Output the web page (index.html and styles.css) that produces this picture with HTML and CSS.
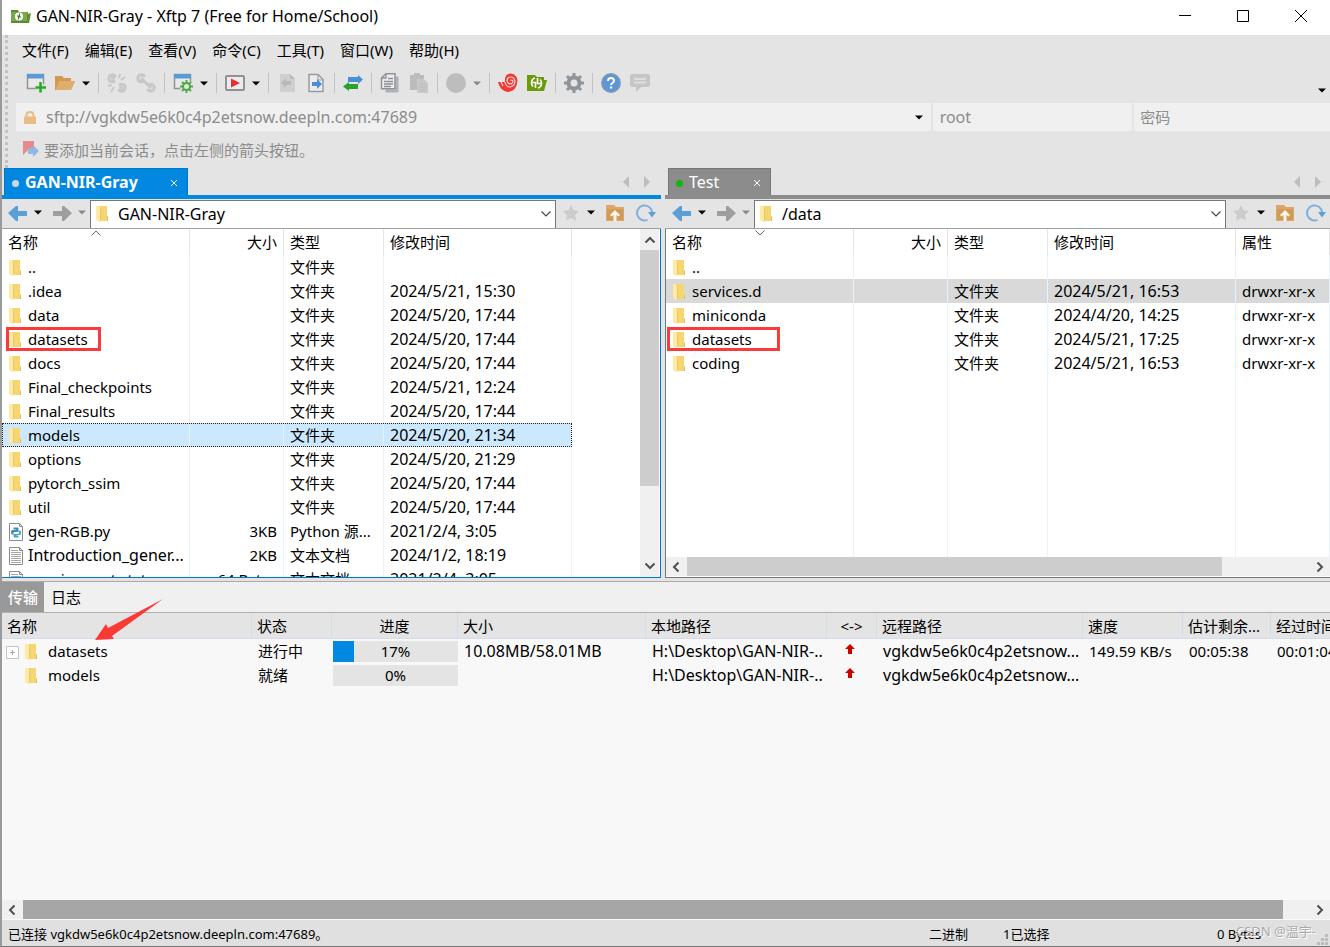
FILE: index.html
```html
<!DOCTYPE html>
<html lang="zh-CN">
<head>
<meta charset="utf-8">
<title>GAN-NIR-Gray - Xftp 7</title>
<link rel="stylesheet" href="styles.css">
</head>
<body>
<svg class="symbols" aria-hidden="true">
  <symbol id="folder" viewBox="0 0 13 18"><path d="M3 1h8v10l1 1v4H4z" fill="#f6d673"/><path d="M11 11l1 1v4h-1z" fill="#e9bd55"/><path d="M0 1h2l2 2v14h-1l-3-2z" fill="#ffe9a6"/><path d="M4.500 3v13" stroke="#edc766" fill="none"/></symbol>
  <symbol id="textfile" viewBox="0 0 14 18"><path d="M.5.5h10l3 3v14H.5z" fill="#fff" stroke="#8c8c8c"/><path d="M10.500.5v3h3" fill="none" stroke="#8c8c8c"/><path d="M2 3.500h7M2 5.500h10M2 7.500h10M2 9.500h10M2 11.500h10M2 13.500h10M2 15.500h10" stroke="#a8a8a8"/></symbol>
  <symbol id="pyfile" viewBox="0 0 14 18"><path d="M.5.5h10l3 3v14H.5z" fill="#fff" stroke="#8c8c8c"/><path d="M10.500.5v3h3" fill="none" stroke="#8c8c8c"/><path d="M4.500 4.500h4q1 0 1 1V9H5.500q-1 0-1 1v1.500H3q-1 0-1-2t1-2.500h4v-.6H4.500z" fill="#3d8fb8"/><path d="M9.500 14.500h-4q-1 0-1-1V11h4q1.500 0 1.500-1.500V7.500h1q1 0 1 2t-1 2.500H7.500v.6h2z" fill="#4aa3c9"/></symbol>
  <symbol id="back" viewBox="0 0 20 16"><path d="M0 8l8-7h2v5h9v5h-9v5H8z" fill="#5b9fd8"/></symbol>
  <symbol id="forward" viewBox="0 0 20 16"><path d="M20 8l-8-7h-2v5H1v5h9v5h2z" fill="#9e9e9e"/></symbol>
  <symbol id="caret" viewBox="0 0 8 5"><path d="M0 .5h8L4 4.500z" fill="currentColor"/></symbol>
  <symbol id="star" viewBox="0 0 16 16"><path d="M8 0l2.500 5.200 5.500.8-4 4 1 5.500-5-2.600-5 2.600 1-5.500-4-4 5.500-.8z" fill="#cccccc"/></symbol>
  <symbol id="upfolder" viewBox="0 0 18 16"><path d="M0 0h8l2 2h8v14H0z" fill="#dda765"/><path d="M1 4h16v11H1z" fill="#d09b58"/><path d="M9 5l5 5-1.500 1.500L10.500 10v6h-3v-6l-2 1.500L4 10z" fill="#fff6e8"/></symbol>
  <symbol id="reload" viewBox="0 0 20 18"><path d="M11.500 15.800A7.500 7.500 0 1 1 16 8" fill="none" stroke="#7fb0de" stroke-width="2"/><path d="M12 8h8l-4 5.500z" fill="#5b9fd8"/></symbol>
  <symbol id="chevdown" viewBox="0 0 10 6"><path d="M.5.5L5 5 9.500.5" fill="none" stroke="#444" stroke-width="1.200"/></symbol>
  <symbol id="sbup" viewBox="0 0 12 8"><path d="M1.500 6.500L6 2l4.500 4.500" fill="none" stroke="#505050" stroke-width="2"/></symbol>
  <symbol id="sbdown" viewBox="0 0 12 8"><path d="M1.500 1.500L6 6l4.500-4.500" fill="none" stroke="#505050" stroke-width="2"/></symbol>
  <symbol id="sbleft" viewBox="0 0 8 12"><path d="M6.500 1.500L2 6l4.500 4.500" fill="none" stroke="#505050" stroke-width="2"/></symbol>
  <symbol id="sbright" viewBox="0 0 8 12"><path d="M1.500 1.500L6 6l-4.500 4.500" fill="none" stroke="#505050" stroke-width="2"/></symbol>
  <symbol id="cross" viewBox="0 0 8 8"><path d="M1 1l6 6M7 1L1 7" stroke="#fff"/></symbol>
  <symbol id="tri-l" viewBox="0 0 6 12"><path d="M6 0v12L0 6z" fill="#bdbdbd"/></symbol>
  <symbol id="tri-r" viewBox="0 0 6 12"><path d="M0 0v12l6-6z" fill="#bdbdbd"/></symbol>
  <symbol id="upload" viewBox="0 0 10 10"><path d="M5 0l5 5H7v5H3V5H0z" fill="#c00"/></symbol>
</svg>

<div class="window">
  <header class="titlebar">
    <svg class="appicon" width="20" height="14" viewBox="0 0 20 14"><path d="M0 1h7l1 2h9v2l3-1-2 10H0z" fill="#5d8c33"/><path d="M0 3h16v9H0z" fill="#79a84d"/><circle cx="8" cy="7.500" r="4" fill="#fff"/><path d="M6 7h1.500v3.500M8.500 4.500V8H10" fill="none" stroke="#4a7d28" stroke-width="1.200"/></svg>
    <h1 class="title">GAN-NIR-Gray - Xftp 7 (Free for Home/School)</h1>
    <div class="winbtns">
      <button class="winbtn" aria-label="最小化"><svg width="12" height="12"><path d="M0 5.500h12" stroke="#000"/></svg></button>
      <button class="winbtn" aria-label="最大化"><svg width="12" height="12"><path d="M.5.5h11v11H.5z" fill="none" stroke="#000"/></svg></button>
      <button class="winbtn" aria-label="关闭"><svg width="12" height="12"><path d="M0 0l12 12M12 0L0 12" stroke="#000"/></svg></button>
    </div>
  </header>

  <div class="chrome">
    <nav class="menu">
      <button class="menuitem">文件(F)</button><button class="menuitem">编辑(E)</button><button class="menuitem">查看(V)</button><button class="menuitem">命令(C)</button><button class="menuitem">工具(T)</button><button class="menuitem">窗口(W)</button><button class="menuitem">帮助(H)</button>
    </nav>
    <div class="toolbar">
      <div class="group">
        <button class="tool" aria-label="新建"><svg width="20" height="20"><path d="M1.500 1.500h16v14h-16z" fill="#e9e9e9" stroke="#8f959b" stroke-width="1.500"/><path d="M1 1h17v4.500H1z" fill="#5b9bd5"/><path d="M14.500 9v10M9.500 14h10" stroke="#e4e4e4" stroke-width="5"/><path d="M14.500 9v10.500M9.500 14.500h10.500" stroke="#27a827" stroke-width="2.500"/></svg></button>
        <button class="tool" aria-label="打开"><svg width="20" height="20"><path d="M0 3h7l2 2h7v3h4l-4 9H0z" fill="#cf9a56"/><path d="M1 16L4 8h15.500L16 17H0z" fill="#dfad6c"/></svg></button>
        <button class="drop" aria-label="打开选项"><svg class="caret"><use href="#caret"/></svg></button>
      </div>
      <div class="group">
        <button class="tool" aria-label="断开"><svg width="20" height="20" fill="none" stroke="#c8c8c8" stroke-width="3"><path d="M8 7.500A3.500 3.500 0 1 1 8.500 4M12 12.500a3.500 3.500 0 1 1-.5 3.500M4 5h4M12 15h4"/><path d="M12 5l1-4M14 7l4-3M5 12l-4 1M7 14l-3 5" stroke-width="2"/></svg></button>
        <button class="tool" aria-label="重新连接"><svg width="20" height="20" fill="none" stroke="#c8c8c8" stroke-width="3"><path d="M8 7.500A3.500 3.500 0 1 1 8.500 4M12 12.500a3.500 3.500 0 1 1-.5 3.500"/><path d="M5 5l10 10"/></svg></button>
      </div>
      <div class="group">
        <button class="tool" aria-label="属性"><svg width="20" height="20"><path d="M1.500 1.500h16v14h-16z" fill="#e9e9e9" stroke="#8f959b" stroke-width="1.500"/><path d="M1 1h17v4.500H1z" fill="#5b9bd5"/><circle cx="13.500" cy="13.500" r="6.500" fill="#e4e4e4"/><circle cx="13.500" cy="13.500" r="3.500" fill="none" stroke="#4daa45" stroke-width="2"/><path d="M13.500 7v3M13.500 17v3M7 13.500h3M17 13.500h3M9 9l2 2M16 16l2 2M18 9l-2 2M11 16l-2 2" stroke="#4daa45" stroke-width="1.800"/></svg></button>
        <button class="drop" aria-label="属性选项"><svg class="caret"><use href="#caret"/></svg></button>
      </div>
      <div class="group">
        <button class="tool" aria-label="运行"><svg width="20" height="20"><rect x="1" y="3" width="18" height="14" rx="1" fill="#ececec" stroke="#8f9194" stroke-width="2"/><path d="M6 5.500l9 4.500-9 4.500z" fill="#e02f35"/></svg></button>
        <button class="drop" aria-label="运行选项"><svg class="caret"><use href="#caret"/></svg></button>
      </div>
      <div class="group">
        <button class="tool" aria-label="向左传输"><svg width="20" height="20"><path d="M3 1h10l5 5v13H3z" fill="#cfcfcf"/><path d="M13 1v5h5M4 10l5-5v3h5v4H9v3z" fill="#b9b9b9"/></svg></button>
        <button class="tool" aria-label="向右传输"><svg width="20" height="20"><path d="M3 1.500h9l5 5v12H3z" fill="#ececec" stroke="#979ca1" stroke-width="1.500"/><path d="M12 1v6h5" fill="none" stroke="#979ca1"/><path d="M16 11l-5-5v3H6v4h5v3z" fill="#478fd6"/></svg></button>
      </div>
      <div class="group">
        <button class="tool" aria-label="同步"><svg width="20" height="20"><path d="M5 4h10V2l5 4.500-5 4.500V9H5z" fill="#478fd6"/><path d="M15 11H6V9l-6 4.500L6 18v-2h9z" fill="#27a32b"/></svg></button>
      </div>
      <div class="group">
        <button class="tool" aria-label="复制"><svg width="20" height="20"><path d="M6 19V17h10V4h2v15z" fill="#b6bac0" stroke="#a8acb2"/><path d="M6 .8h9v15H1.500V5z" fill="#ededed" stroke="#8d9298" stroke-width="1.500"/><path d="M6 1v4H2M4 8.500h9M4 11h9M4 13.500h7M8 5.500h5" fill="none" stroke="#8d9298" stroke-width="1.300"/></svg></button>
        <button class="tool" aria-label="粘贴"><svg width="20" height="20"><path d="M1 2h4V0h6v2h4v4h-7v11H1z" fill="#bcbcbc"/><path d="M8 6h7l4 4v10H8z" fill="#c9c9c9"/><path d="M10 11h7M10 14h7M10 17h7" stroke="#bababa"/></svg></button>
      </div>
      <div class="group">
        <button class="tool" aria-label="浏览器"><svg width="20" height="20"><circle cx="10" cy="10" r="10" fill="#bdbdbd"/></svg></button>
        <button class="drop dim" aria-label="浏览器选项"><svg class="caret"><use href="#caret"/></svg></button>
      </div>
      <div class="group">
        <button class="tool" aria-label="Xshell"><svg width="20" height="20"><path d="M0 9h7Q6 1 13 .5q6 1 6.500 7Q19 18 10 19 2 18 0 9z" fill="#f23a32"/><path d="M7 9q1 5 5 5 5-1 5-6-1-4-4-4-4 0-4 4 1 3 4 3 2-1 2-3-1-1.500-2.500-.5M17 2l3 1M3 9l2 4" fill="none" stroke="#f3d9d7" stroke-width="1.200"/></svg></button>
        <button class="tool" aria-label="Xftp"><svg width="20" height="20"><path d="M0 2h8l2 2h7v3h3l-3 11H0z" fill="#6b9a0c"/><path d="M8.500 15V9.500H5.500M8 5Q4.500 6 4.500 10q0 2 1.500 3.500M10.500 5v5.500h3M11 15q3.500-1 3.500-5 0-2-1.500-3.500" fill="none" stroke="#fff" stroke-width="1.600"/></svg></button>
      </div>
      <div class="group">
        <button class="tool" aria-label="选项"><svg width="20" height="20"><circle cx="10" cy="10" r="5.500" fill="none" stroke="#8f9499" stroke-width="4"/><path d="M10 0v4M10 16v4M0 10h4M16 10h4M3 3l3 3M14 14l3 3M17 3l-3 3M6 14l-3 3" stroke="#8f9499" stroke-width="3"/></svg></button>
      </div>
      <div class="group">
        <button class="tool" aria-label="帮助"><svg width="20" height="20"><circle cx="10" cy="10" r="9.200" fill="#5b96d6" stroke="#8198b0" stroke-width="1.500"/><path d="M7 8q0-3 3-3t3 2.500q0 1.500-1.500 2.500T10 12" fill="none" stroke="#fff" stroke-width="2"/><path d="M9 13.500h2.200v2H9z" fill="#fff"/></svg></button>
        <button class="tool" aria-label="反馈"><svg width="20" height="20"><path d="M2 1h16q2 0 2 2v9q0 2-2 2h-7l-5 5v-5H2q-2 0-2-2V3q0-2 2-2z" fill="#c6c6c6"/><path d="M4 6h12M4 9.500h12" stroke="#dedede" stroke-width="2"/></svg></button>
      </div>
      <button class="overflow" aria-label="更多"><svg class="caret"><use href="#caret"/></svg></button>
    </div>
    <div class="connect">
      <label class="host"><svg width="12" height="13"><path d="M2.500 6V4Q2.500 1 6 1t3.500 3v2" fill="none" stroke="#e8bd85" stroke-width="2"/><path d="M0 5.500h12V13H0z" fill="#e8bd85"/></svg><input class="field" aria-label="主机" value="sftp://vgkdw5e6k0c4p2etsnow.deepln.com:47689"><svg class="caret"><use href="#caret"/></svg></label>
      <input class="field user" aria-label="用户名" value="root">
      <input class="field pass" type="password" aria-label="密码" placeholder="密码">
    </div>
    <div class="hint"><svg width="16" height="17"><path d="M0 0h11v12l-5-4-6 6z" fill="#e58b8b"/><path d="M5 7h5V4l6 6-6 6v-3H5z" fill="#93b7de"/></svg><span>要添加当前会话，点击左侧的箭头按钮。</span></div>
  </div>

  <main class="panes">
    <section class="pane local">
      <div class="tabs">
        <div class="tab"><i class="dot"></i><button class="tabname">GAN-NIR-Gray</button><button class="close" aria-label="关闭标签"><svg width="8" height="8"><use href="#cross"/></svg></button></div>
        <div class="tabnav"><button aria-label="上一个"><svg width="6" height="12"><use href="#tri-l"/></svg></button><button aria-label="下一个"><svg width="6" height="12"><use href="#tri-r"/></svg></button></div>
      </div>
      <div class="pathbar">
        <div class="navs"><button aria-label="后退"><svg width="20" height="16"><use href="#back"/></svg></button><svg class="caret"><use href="#caret"/></svg><button aria-label="前进"><svg width="20" height="16"><use href="#forward"/></svg></button><svg class="caret dim"><use href="#caret"/></svg></div>
        <label class="path"><svg width="13" height="18"><use href="#folder"/></svg><input aria-label="本地路径" value="GAN-NIR-Gray"><svg width="10" height="6"><use href="#chevdown"/></svg></label>
        <div class="acts"><button aria-label="收藏"><svg width="16" height="16"><use href="#star"/></svg></button><svg class="caret"><use href="#caret"/></svg><button aria-label="上级"><svg width="18" height="16"><use href="#upfolder"/></svg></button><button aria-label="刷新"><svg width="20" height="18"><use href="#reload"/></svg></button></div>
      </div>
      <div class="content">
        <div class="list">
          <table class="files">
            <colgroup><col class="c-name"><col class="c-size"><col class="c-type"><col class="c-date"></colgroup>
            <thead><tr><th>名称<svg class="sort" width="10" height="6" viewBox="0 0 10 6"><path d="M.5 5.500L5 1l4.500 4.500" fill="none" stroke="#666"/></svg></th><th class="r">大小</th><th>类型</th><th>修改时间</th></tr></thead>
            <tbody>
              <tr><td class="n"><svg><use href="#folder"/></svg>..</td><td></td><td>文件夹</td><td></td></tr>
              <tr><td class="n"><svg><use href="#folder"/></svg>.idea</td><td></td><td>文件夹</td><td class="lg">2024/5/21, 15:30</td></tr>
              <tr><td class="n"><svg><use href="#folder"/></svg>data</td><td></td><td>文件夹</td><td class="lg">2024/5/20, 17:44</td></tr>
              <tr><td class="n mark"><svg><use href="#folder"/></svg>datasets</td><td></td><td>文件夹</td><td class="lg">2024/5/20, 17:44</td></tr>
              <tr><td class="n"><svg><use href="#folder"/></svg>docs</td><td></td><td>文件夹</td><td class="lg">2024/5/20, 17:44</td></tr>
              <tr><td class="n"><svg><use href="#folder"/></svg>Final_checkpoints</td><td></td><td>文件夹</td><td class="lg">2024/5/21, 12:24</td></tr>
              <tr><td class="n"><svg><use href="#folder"/></svg>Final_results</td><td></td><td>文件夹</td><td class="lg">2024/5/20, 17:44</td></tr>
              <tr class="selected"><td class="n"><svg><use href="#folder"/></svg>models</td><td></td><td>文件夹</td><td class="lg">2024/5/20, 21:34</td></tr>
              <tr><td class="n"><svg><use href="#folder"/></svg>options</td><td></td><td>文件夹</td><td class="lg">2024/5/20, 21:29</td></tr>
              <tr><td class="n"><svg><use href="#folder"/></svg>pytorch_ssim</td><td></td><td>文件夹</td><td class="lg">2024/5/20, 17:44</td></tr>
              <tr><td class="n"><svg><use href="#folder"/></svg>util</td><td></td><td>文件夹</td><td class="lg">2024/5/20, 17:44</td></tr>
              <tr><td class="n"><svg class="doc"><use href="#pyfile"/></svg>gen-RGB.py</td><td class="r">3KB</td><td>Python 源...</td><td class="lg">2021/2/4, 3:05</td></tr>
              <tr><td class="n lg"><svg class="doc"><use href="#textfile"/></svg>Introduction_gener...</td><td class="r">2KB</td><td>文本文档</td><td class="lg">2024/1/2, 18:19</td></tr>
              <tr><td class="n"><svg class="doc"><use href="#textfile"/></svg>requirements.txt</td><td class="r">64 Bytes</td><td>文本文档</td><td class="lg">2021/2/4, 3:05</td></tr>
            </tbody>
          </table>
        </div>
        <div class="vscroll"><svg width="12" height="8"><use href="#sbup"/></svg><div class="vtrack"><div class="vthumb"></div></div><svg width="12" height="8"><use href="#sbdown"/></svg></div>
      </div>
    </section>

    <section class="pane remote">
      <div class="tabs">
        <div class="tab"><i class="dot"></i><button class="tabname">Test</button><button class="close" aria-label="关闭标签"><svg width="8" height="8"><use href="#cross"/></svg></button></div>
        <div class="tabnav"><button aria-label="上一个"><svg width="6" height="12"><use href="#tri-l"/></svg></button><button aria-label="下一个"><svg width="6" height="12"><use href="#tri-r"/></svg></button></div>
      </div>
      <div class="pathbar">
        <div class="navs"><button aria-label="后退"><svg width="20" height="16"><use href="#back"/></svg></button><svg class="caret"><use href="#caret"/></svg><button aria-label="前进"><svg width="20" height="16"><use href="#forward"/></svg></button><svg class="caret dim"><use href="#caret"/></svg></div>
        <label class="path"><svg width="13" height="18"><use href="#folder"/></svg><input aria-label="远程路径" value="/data"><svg width="10" height="6"><use href="#chevdown"/></svg></label>
        <div class="acts"><button aria-label="收藏"><svg width="16" height="16"><use href="#star"/></svg></button><svg class="caret"><use href="#caret"/></svg><button aria-label="上级"><svg width="18" height="16"><use href="#upfolder"/></svg></button><button aria-label="刷新"><svg width="20" height="18"><use href="#reload"/></svg></button></div>
      </div>
      <div class="content stacked">
        <div class="list">
          <table class="files full">
            <colgroup><col class="c-name"><col class="c-size"><col class="c-type"><col class="c-date"><col></colgroup>
            <thead><tr><th>名称<svg class="sort" width="10" height="6" viewBox="0 0 10 6"><path d="M.5.5L5 5 9.500.5" fill="none" stroke="#666"/></svg></th><th class="r">大小</th><th>类型</th><th>修改时间</th><th>属性</th></tr></thead>
            <tbody>
              <tr><td class="n"><svg><use href="#folder"/></svg>..</td><td></td><td></td><td></td><td></td></tr>
              <tr class="inactive"><td class="n"><svg><use href="#folder"/></svg>services.d</td><td></td><td>文件夹</td><td class="lg">2024/5/21, 16:53</td><td>drwxr-xr-x</td></tr>
              <tr><td class="n"><svg><use href="#folder"/></svg>miniconda</td><td></td><td>文件夹</td><td class="lg">2024/4/20, 14:25</td><td>drwxr-xr-x</td></tr>
              <tr><td class="n mark"><svg><use href="#folder"/></svg>datasets</td><td></td><td>文件夹</td><td class="lg">2024/5/21, 17:25</td><td>drwxr-xr-x</td></tr>
              <tr><td class="n"><svg><use href="#folder"/></svg>coding</td><td></td><td>文件夹</td><td class="lg">2024/5/21, 16:53</td><td>drwxr-xr-x</td></tr>
              <tr class="filler"><td></td><td></td><td></td><td></td><td></td></tr>
            </tbody>
          </table>
        </div>
        <div class="hscroll"><svg width="8" height="12"><use href="#sbleft"/></svg><div class="htrack"><div class="hthumb"></div></div><svg width="8" height="12"><use href="#sbright"/></svg></div>
      </div>
    </section>
  </main>

  <section class="transfer">
    <div class="ttabs"><button class="ttab on">传输</button><button class="ttab">日志</button></div>
    <div class="tlist">
      <table class="jobs">
        <colgroup><col class="j-name"><col class="j-state"><col class="j-prog"><col class="j-size"><col class="j-local"><col class="j-dir"><col class="j-remote"><col class="j-speed"><col class="j-left"><col class="j-time"></colgroup>
        <thead><tr><th>名称</th><th>状态</th><th class="mid">进度</th><th>大小</th><th>本地路径</th><th class="mid">&lt;-&gt;</th><th>远程路径</th><th>速度</th><th>估计剩余...</th><th>经过时间</th></tr></thead>
        <tbody>
          <tr><td class="n"><svg class="plus"><path d="M.5.5h12v12H.5z" fill="#fff" stroke="#c4c4c4"/><path d="M4 6.500h5M6.500 4v5" stroke="#aaa"/></svg><svg class="f"><use href="#folder"/></svg>datasets</td><td>进行中</td><td class="bar"><div class="progress"><div class="fill" style="width:17%"></div><span>17%</span></div></td><td class="lg">10.08MB/58.01MB</td><td class="lg">H:\Desktop\GAN-NIR-..</td><td class="mid"><svg class="up"><use href="#upload"/></svg></td><td class="lg">vgkdw5e6k0c4p2etsnow...</td><td>149.59 KB/s</td><td>00:05:38</td><td>00:01:04</td></tr>
          <tr><td class="n"><svg class="plus"></svg><svg class="f"><use href="#folder"/></svg>models</td><td>就绪</td><td class="bar"><div class="progress"><span>0%</span></div></td><td></td><td class="lg">H:\Desktop\GAN-NIR-..</td><td class="mid"><svg class="up"><use href="#upload"/></svg></td><td class="lg">vgkdw5e6k0c4p2etsnow...</td><td></td><td></td><td></td></tr>
        </tbody>
      </table>
    </div>
    <div class="hscroll dark"><svg width="8" height="12"><use href="#sbleft"/></svg><div class="htrack"><div class="hthumb"></div></div><svg width="8" height="12"><use href="#sbright"/></svg></div>
    <svg class="pointer" width="70" height="44"><path d="M68 1L17 38l2 3-19 1 11-16 2 4z" fill="#fb3a36"/></svg>
  </section>

  <footer class="status">
    <span class="s-conn">已连接 vgkdw5e6k0c4p2etsnow.deepln.com:47689。</span><span class="s-mode">二进制</span><span class="s-sel">1已选择</span><span class="s-bytes">0 Bytes</span>
    <span class="watermark">CSDN @温宇-</span>
    <svg class="grip" width="11" height="11" fill="#bcbcbc"><path d="M8 0h3v3H8zM4 4h3v3H4zM8 4h3v3H8zM0 8h3v3H0zM4 8h3v3H4zM8 8h3v3H8z"/></svg>
  </footer>
</div>
</body>
</html>
```
FILE: styles.css
```css
*, *::after { box-sizing: border-box; }
body { margin: 0; background: #e4e4e4; color: #000; font: 15px/20px "Noto Sans", "Noto Sans CJK SC", sans-serif; }
button { border: 0; padding: 0; margin: 0; background: none; color: inherit; font: inherit; display: flex; align-items: center; justify-content: center; }
input { border: 0; padding: 0; margin: 0; background: none; color: inherit; font: inherit; font-size: 16px; min-width: 0; flex: 1; outline: 0; }
svg { display: block; flex: none; }
.symbols { position: absolute; width: 0; height: 0; }
.caret { width: 8px; height: 5px; color: #000; }
.dim, .dim .caret { color: #8a8a8a; }
.lg { font-size: 16px; }

.window { height: 100vh; display: grid; grid-template-rows: auto auto minmax(0, 410fr) minmax(0, 342fr) auto; grid-template-columns: minmax(0, 1fr); border-left: 2px solid #9a9a9a; border-bottom: 1px solid #777; }

.titlebar { height: 35px; background: #fff; display: flex; align-items: center; padding-left: 9px; gap: 5px; }
.appicon { margin-bottom: 4px; }
.title { margin: 0; font-size: 16px; font-weight: 400; padding-bottom: 4px; }
.winbtns { margin-left: auto; display: flex; padding-bottom: 4px; }
.winbtn { width: 58px; height: 30px; }

.chrome { margin-left: 3px; border-left: 3px dotted #c2c2c2; padding-left: 8px; height: 133px; }
.menu { display: flex; gap: 16px; padding: 5px 0 0 6px; height: 32px; }
.menuitem { height: 20px; }
.toolbar { display: flex; align-items: center; height: 32px; padding-left: 10px; }
.group { display: flex; align-items: center; gap: 9px; padding-right: 8px; margin-right: 8px; border-right: 1px solid #c2c2c2; }
.group:nth-last-child(2) { border: 0; }
.tool { width: 20px; height: 20px; }
.drop { width: 8px; height: 20px; margin-left: -2px; }
.overflow { margin-left: auto; padding: 14px 4px 0 0; }
.connect { display: flex; gap: 2px; margin-top: 4px; height: 28px; color: #8c8c8c; }
.host { flex: 919 1 0; min-width: 0; display: flex; align-items: center; gap: 10px; background: #f0f0f0; padding: 0 8px; }
.field { background: #f0f0f0; height: 28px; }
.user { flex: 197 1 0; padding-left: 7px; }
.pass { flex: 194 1 0; padding-left: 6px; font-size: 15px; }
.pass::placeholder { color: #8c8c8c; }
.hint { display: flex; align-items: center; gap: 5px; padding-left: 7px; height: 37px; color: #8c8c8c; }

.panes { display: flex; gap: 4px; }
.pane { display: flex; flex-direction: column; min-width: 0; --accent: #0288e0; --edge: #0078c8; }
.local { flex: 659 1 0; }
.remote { flex: 665 1 0; --accent: #8c8c8c; --edge: #777; }
.tabs { display: flex; justify-content: space-between; height: 31px; border-bottom: 4px solid var(--accent); padding: 0 11px 0 2px; }
.remote .tabs { padding: 0 9px 0 3px; }
.tab { display: flex; align-items: center; background: var(--accent); color: #fff; width: 184px; padding: 2px 9px 0 7px; gap: 6px; border: 1px solid var(--edge); border-bottom: 0; }
.remote .tab { width: 103px; }
.dot { width: 7px; height: 7px; border-radius: 50%; background: #c9d8e4; }
.remote .dot { background: #0bb80b; }
.tabname { font-size: 16px; font-weight: 700; padding-bottom: 2px; }
.remote .tabname { font-weight: 400; }
.close { margin-left: auto; }
.tabnav { display: flex; gap: 15px; }
.pathbar { display: flex; height: 30px; border-bottom: 1px solid #a0a0a0; }
.navs { display: flex; align-items: center; gap: 6px; width: 88px; padding: 0 0 2px 6px; }
.remote .navs { width: 89px; padding-left: 7px; }
.navs button + .caret { margin-right: 4px; }
.path { flex: 1; min-width: 0; display: flex; align-items: center; gap: 9px; border: 1px solid #777; border-bottom: 0; background: #fff; padding: 0 4px 1px 5px; margin-top: 1px; }
.acts { display: flex; align-items: center; width: 105px; gap: 8px; padding: 0 0 2px 7px; }
.remote .acts { width: 104px; }
.acts .caret { margin-right: 3px; }
.acts button + button { margin-left: 4px; }
.content { flex: 1; min-height: 0; display: flex; background: #fff; border: 1px solid var(--edge); border-top: 0; border-left: 0; }
.remote .content { border-left: 1px solid var(--edge); border-right: 0; }
.stacked { flex-direction: column; }
.list { flex: 1; min-width: 0; min-height: 0; overflow: hidden; }

table { table-layout: fixed; border-collapse: separate; border-spacing: 0; }
th { font-weight: 400; text-align: left; }
th, td { padding: 0; white-space: nowrap; overflow: hidden; }
.r { text-align: right; }
.files { width: 570px; }
.full { width: 100%; height: 100%; }
.c-name { width: 188px; } .c-size { width: 94px; } .c-type { width: 100px; } .c-date { width: 188px; }
.files th { height: 26px; padding: 0 6px; border-right: 1px solid #e4e4e4; position: relative; }
.files td { height: 24px; padding: 0 6px; border-right: 1px solid #e8f2fb; }
.files .filler td { height: auto; }
.sort { position: absolute; left: 50%; top: 1px; margin-left: -5px; }
.n svg { display: inline-block; vertical-align: -4px; width: 13px; height: 18px; margin: -2px 6px 0 1px; }
.n .doc { width: 14px; margin-right: 5px; }
.selected td { background: #cce8ff; }
.selected { outline: 1px dotted #222; outline-offset: -1px; }
.inactive td { background: #d9d9d9; }
.mark { position: relative; }
.mark::after { content: ""; position: absolute; left: 4px; top: 0; width: 95px; height: 24px; border: 3px solid #f93b3b; }
.remote .mark::after { left: 1px; width: 113px; }

.vscroll { width: 19px; background: #f0f0f0; display: flex; flex-direction: column; align-items: center; padding: 7px 0; gap: 6px; margin-right: 1px; }
.vtrack { flex: 1; width: 100%; }
.vthumb { height: 77%; background: #cdcdcd; }
.hscroll { height: 19px; background: #f0f0f0; display: flex; align-items: center; padding: 0 6px; gap: 7px; margin-bottom: 1px; }
.htrack { flex: 1; height: 100%; }
.hthumb { width: 86%; height: 100%; background: #cdcdcd; }
.dark .hthumb { width: 98%; background: #a6a6a6; }

.transfer { position: relative; display: flex; flex-direction: column; margin-top: 3px; border-top: 1px solid #aaa; background: #f8f8f8; }
.ttabs { display: flex; height: 31px; background: #f0f0f0; border-bottom: 1px solid #b0b0b0; }
.ttab { width: 42px; height: 29px; margin-right: 1px; }
.ttab.on { height: 30px; background: #999; color: #fff; font-weight: 500; }
.tlist { flex: 1; min-height: 0; overflow: hidden; }
.jobs { width: 1368px; }
.j-name { width: 250px; } .j-state { width: 80px; } .j-prog { width: 126px; } .j-size { width: 188px; } .j-local { width: 181px; } .j-dir { width: 50px; } .j-remote { width: 206px; } .j-speed { width: 100px; } .j-left { width: 88px; } .j-time { width: 99px; }
.jobs th { height: 26px; background: #e4e4e4; border-right: 1px solid #d3dcea; border-bottom: 1px solid #d3dcea; padding-left: 5px; }
.jobs td { height: 24px; padding-left: 6px; }
.jobs .mid { text-align: center; padding-left: 0; }
.jobs td.mid { padding-right: 4px; }
.jobs .n { padding-left: 4px; }
.jobs .n .plus { width: 13px; height: 13px; vertical-align: -2px; margin: 0 5px 0 0; }
.jobs .n .f { margin-right: 10px; }
.jobs .bar { padding: 1px 0 0 1px; }
.progress { position: relative; height: 21px; background: #e4e4e4; text-align: center; }
.fill { height: 100%; background: #0288e0; }
.progress span { position: absolute; inset: 0; }
.up { width: 10px; height: 10px; margin: -4px auto 0; }
.pointer { position: absolute; left: 93px; top: 16px; }

.status { position: relative; height: 26px; background: #e0e0e0; display: flex; align-items: center; font-size: 13px; padding: 2px 3px 0 6px; }
.s-conn { flex: 921 1 0; } .s-mode { flex: 74 1 0; } .s-sel { flex: 214 1 0; } .s-bytes { flex: 110 1 0; }
.watermark { position: absolute; right: 14px; top: 1px; color: #aaa; text-shadow: 1px 1px 0 #fff; }
.grip { position: absolute; right: 2px; bottom: 1px; }
```
